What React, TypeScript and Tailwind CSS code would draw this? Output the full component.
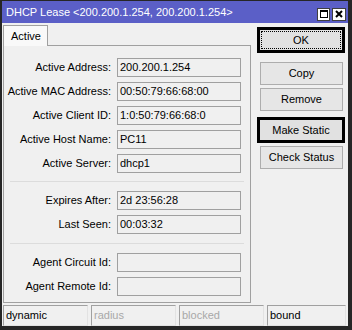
import React from 'react';

const font = { fontFamily: '"Liberation Sans", Arial, sans-serif' };

function Field({ label, value }: { label: string; value: string }) {
  return (
    <div className="flex h-[24px] items-center">
      <div className="w-[108px] pr-[1px] text-right text-[11px] text-black">{label}:</div>
      <div className="ml-[5px] flex h-[19px] w-[124px] items-center border border-[#a0a0a0] bg-[#f0f0f0] pl-[2px] text-[11px] text-black">
        {value}
      </div>
    </div>
  );
}

function Sep({ h }: { h: string }) {
  return (
    <div className={`${h} flex items-center px-[6px]`}>
      <div className="h-px w-full bg-[#dcdcdc]" />
    </div>
  );
}

function Btn({ label, focus, dotted }: { label: string; focus?: boolean; dotted?: boolean }) {
  if (focus) {
    return (
      <div className="flex h-[26px] w-[88px] border-[3px] border-black bg-[#e1e1e1] p-[1px]">
        <div
          className={`flex flex-1 items-center justify-center text-[11px] text-black ${dotted ? 'border border-dotted border-black' : ''}`}
        >
          {label}
        </div>
      </div>
    );
  }
  return (
    <div className="ml-[3px] flex h-[23px] w-[83px] items-center justify-center border border-[#adadad] bg-[#e6e6e6] text-[11px] text-black">
      {label}
    </div>
  );
}

function Cell({ label, dim, w }: { label: string; dim?: boolean; w: string }) {
  return (
    <div
      className={`${w} flex h-[21px] items-center border-t border-l border-[#a0a0a0] border-r-[#e2e2e2] border-b-[#e2e2e2] border-r border-b pl-[2px] text-[11px] ${dim ? 'text-[#a8a8a8]' : 'text-black'}`}
    >
      {label}
    </div>
  );
}

export default function App() {
  return (
    <div
      className="h-[330px] w-[352px] overflow-hidden bg-[#262626] pt-[1px] pr-[4px] pb-[4px] pl-[2px]"
      style={font}
    >
      <div className="flex h-[325px] flex-col">
        {/* title bar */}
        <div className="flex h-[22px] items-center bg-[#5b5fc7] pl-[4px] pr-[2px]">
          <span className="flex-1 text-[11px] text-white">DHCP Lease &lt;200.200.1.254, 200.200.1.254&gt;</span>
          <div className="mt-[4px] flex gap-[2px]">
            <div className="flex h-[13px] w-[13px] items-center justify-center border border-[#404040] bg-white">
              <div className="h-[8px] w-[8px] border border-t-2 border-black" />
            </div>
            <div className="flex h-[13px] w-[14px] items-center justify-center border border-[#404040] bg-white">
              <svg width="8" height="8" viewBox="0 0 8 8">
                <path d="M1 1 L7 7 M7 1 L1 7" stroke="black" strokeWidth="2" />
              </svg>
            </div>
          </div>
        </div>

        {/* body */}
        <div className="flex flex-1 flex-col bg-[#f0f0f0] px-[1px]">
          <div className="flex h-[281px]">
            <div className="flex w-[248px] flex-col pt-[2px]">
              <div className="relative z-10 flex h-[21px] w-[45px] items-center border-t border-r border-l border-[#a0a0a0] bg-[#f9f9f9] pl-[7px] text-[11px] text-black">
                Active
              </div>
              <div className="-mt-px flex h-[258px] flex-col border border-[#a0a0a0] bg-[#f0f0f0] pt-[9px]">
                <Field label="Active Address" value="200.200.1.254" />
                <Field label="Active MAC Address" value="00:50:79:66:68:00" />
                <Field label="Active Client ID" value="1:0:50:79:66:68:0" />
                <Field label="Active Host Name" value="PC11" />
                <Field label="Active Server" value="dhcp1" />
                <Sep h="h-[13px]" />
                <Field label="Expires After" value="2d 23:56:28" />
                <Field label="Last Seen" value="00:03:32" />
                <Sep h="h-[14px]" />
                <Field label="Agent Circuit Id" value="" />
                <Field label="Agent Remote Id" value="" />
              </div>
            </div>
            <div className="ml-[6px] flex flex-col pt-[4px]">
              <Btn label="OK" focus dotted />
              <div className="mt-[9px]">
                <Btn label="Copy" />
              </div>
              <div className="mt-[3px]">
                <Btn label="Remove" />
              </div>
              <div className="mt-[6px]">
                <Btn label="Make Static" focus />
              </div>
              <div className="mt-[3px]">
                <Btn label="Check Status" />
              </div>
            </div>
          </div>
          <div className="mt-[1px] flex gap-[3px]">
            <Cell label="dynamic" w="w-[85px]" />
            <Cell label="radius" dim w="w-[85px]" />
            <Cell label="blocked" dim w="w-[85px]" />
            <Cell label="bound" w="w-[79px]" />
          </div>
        </div>
      </div>
    </div>
  );
}
